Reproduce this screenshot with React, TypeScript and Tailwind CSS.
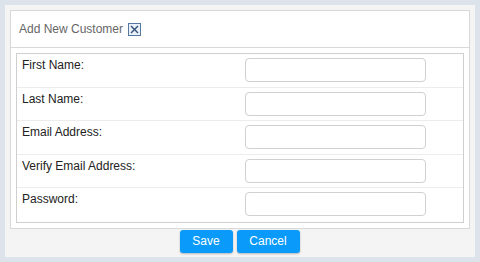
import React from 'react';

const fields = ['First Name:', 'Last Name:', 'Email Address:', 'Verify Email Address:', 'Password:'];

export default function App() {
  return (
    <div className="w-[480px] h-[262px] bg-[#dde3ea] p-[5px] font-['Liberation_Sans',Arial,sans-serif]">
      <div className="h-[252px] bg-[#f4f4f4] px-[5px] pt-[5px]">
        <div className="bg-white border border-[#d8d8d8]">
          <div className="h-[37px] flex items-center pl-[8px] border-b border-[#d8d8d8]">
            <span className="text-[12px] text-[#666]">Add New Customer</span>
            <span className="ml-[5px] mt-[1px] w-[13px] h-[13px] border border-[#5577a0] bg-[#e9f0f8] flex items-center justify-center">
              <svg width="9" height="9" viewBox="0 0 9 9">
                <path d="M1 1L8 8M8 1L1 8" stroke="#2f4f78" strokeWidth="1.4" />
              </svg>
            </span>
          </div>
          <div className="p-[5px]">
            <div className="border border-[#cfcfcf]">
              {fields.map((f, i) => (
                <div
                  key={f}
                  className={`h-[33.5px] flex items-start ${i < fields.length - 1 ? 'border-b border-[#ececec]' : ''}`}
                >
                  <div className="w-[228px] pl-[5px] pt-[2px] text-[12px] text-[#222]">{f}</div>
                  <input
                    type={f === 'Password:' ? 'password' : 'text'}
                    className="mt-[4px] w-[181px] h-[24px] border border-[#d0d0d0] rounded-[4px] bg-white outline-none"
                  />
                </div>
              ))}
            </div>
          </div>
        </div>
        <div className="flex justify-center gap-[4px] pt-[1px] pr-[1px]">
          <button className="w-[53px] h-[23px] bg-[#0a9bfa] text-white text-[12px] rounded-[3px] shadow-[0_1px_2px_rgba(0,0,0,0.25)]">
            Save
          </button>
          <button className="w-[63px] h-[23px] bg-[#0a9bfa] text-white text-[12px] rounded-[3px] shadow-[0_1px_2px_rgba(0,0,0,0.25)]">
            Cancel
          </button>
        </div>
      </div>
    </div>
  );
}
